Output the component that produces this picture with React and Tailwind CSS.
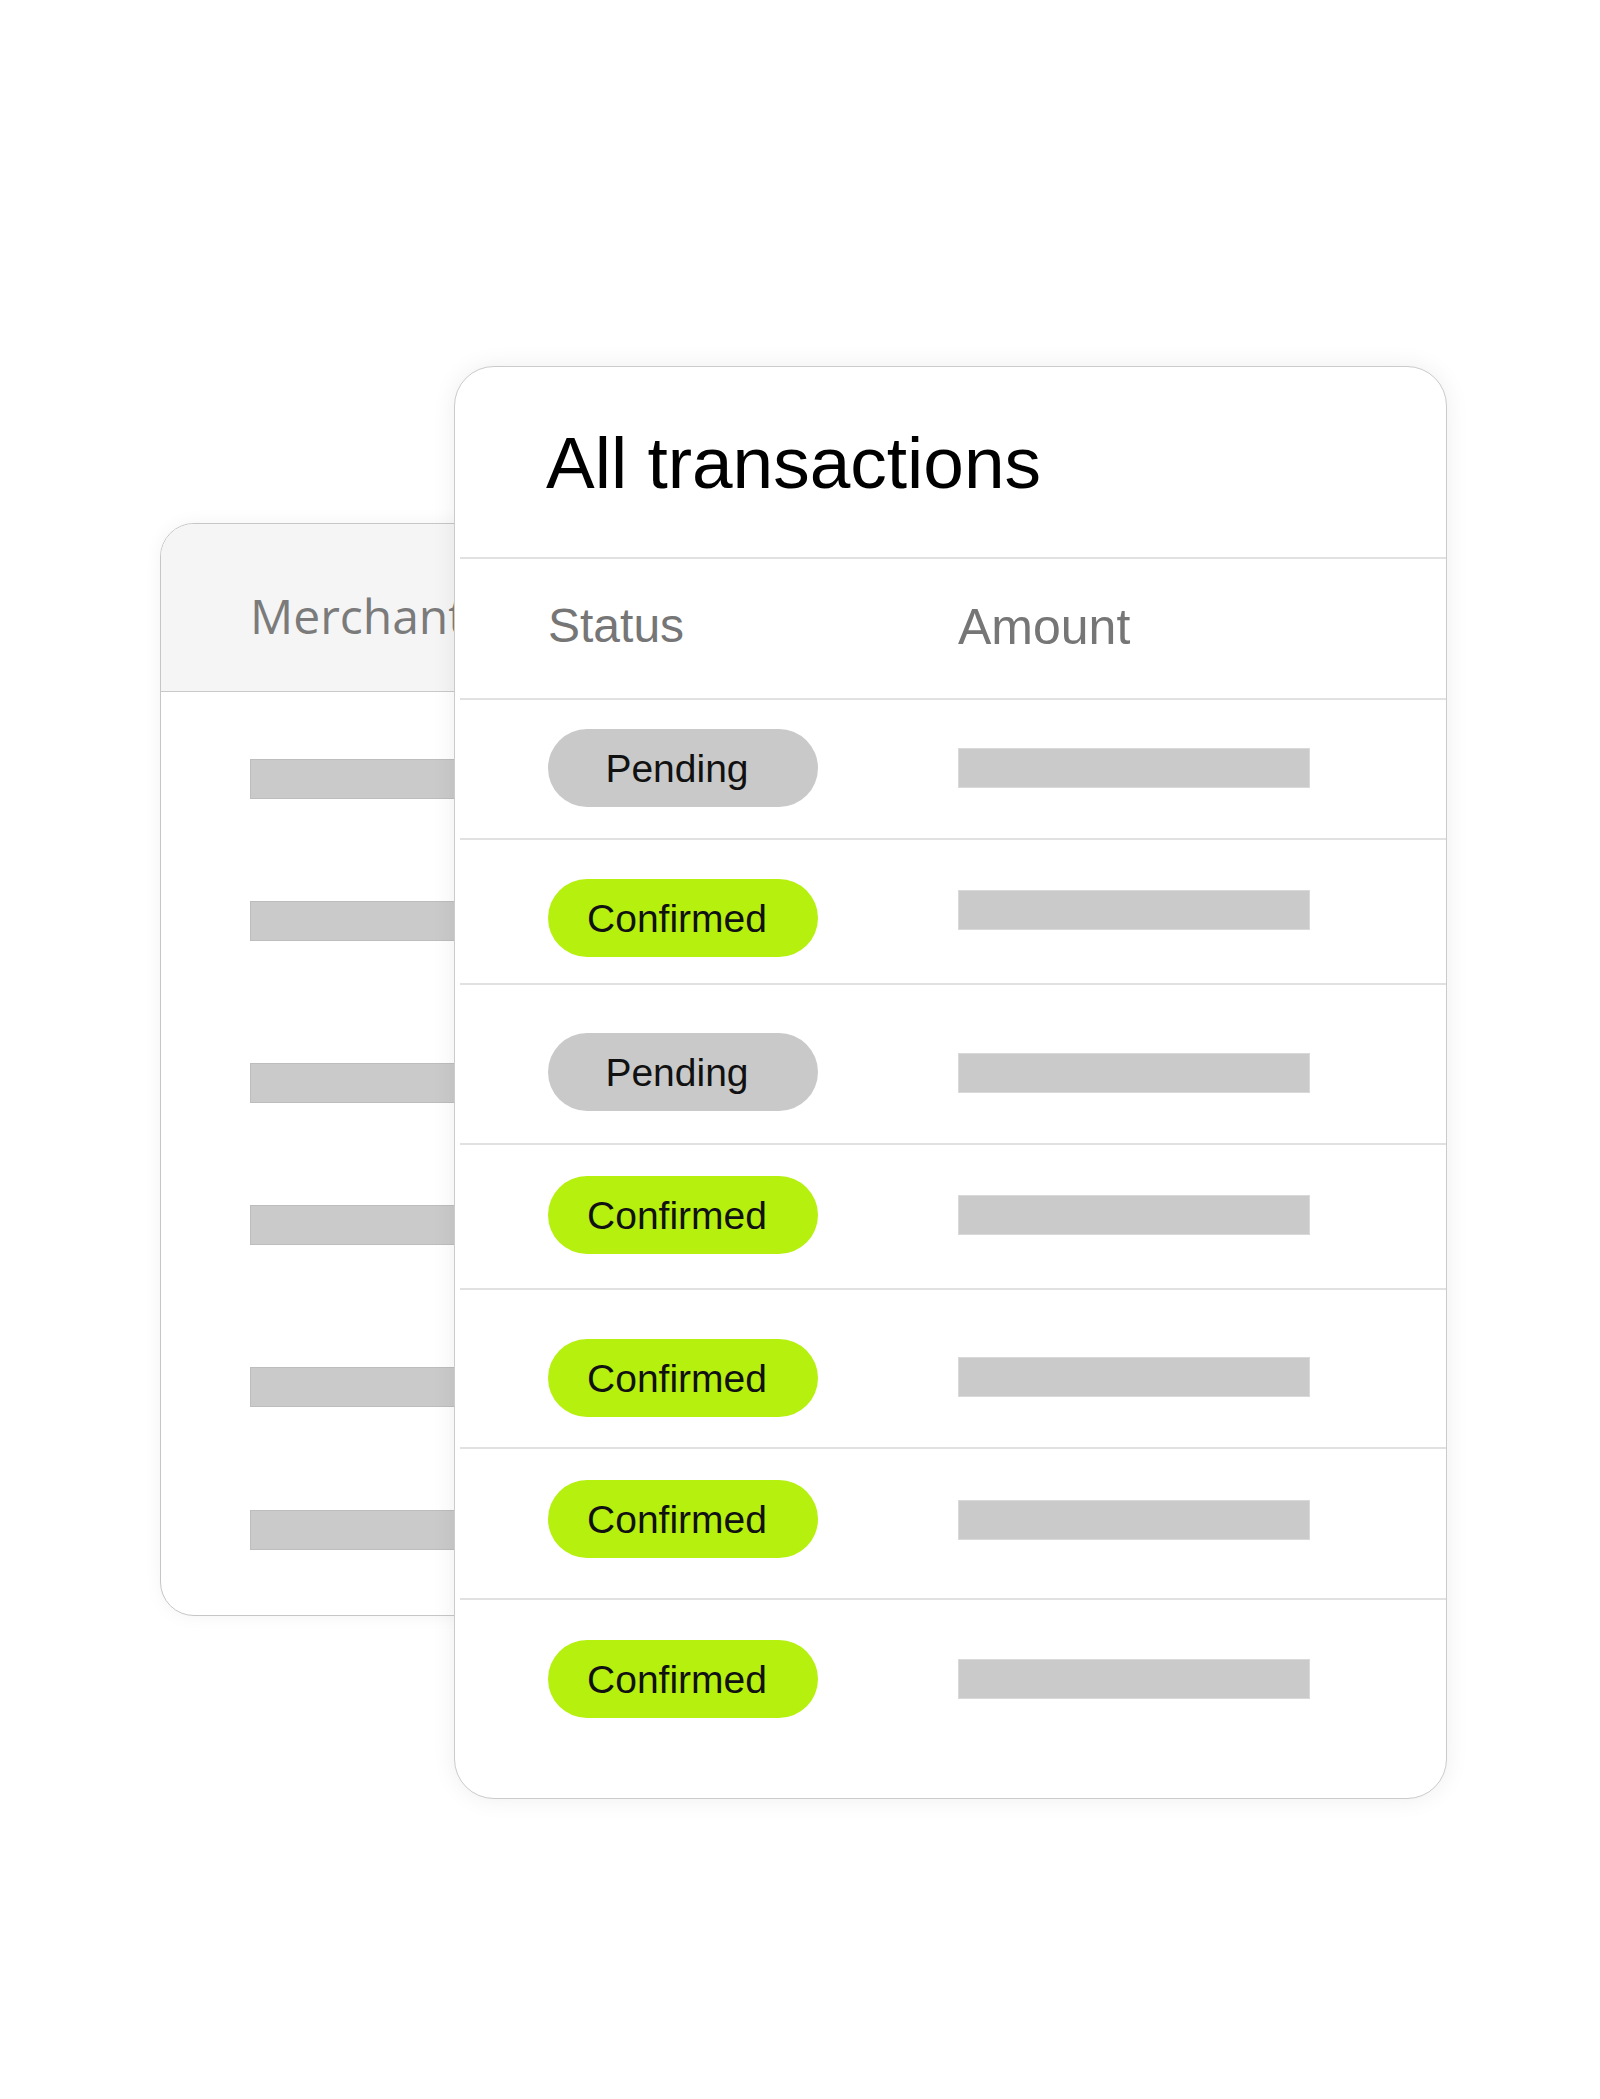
const rows = [
  { status: 'Pending', pt: 'pt-[29px]', pb: 'pb-[31px]', bar: 'mt-[19px]' },
  { status: 'Confirmed', pt: 'pt-[39px]', pb: 'pb-[26px]', bar: 'mt-[11px]' },
  { status: 'Pending', pt: 'pt-[48px]', pb: 'pb-[32px]', bar: 'mt-[20px]' },
  { status: 'Confirmed', pt: 'pt-[31px]', pb: 'pb-[34px]', bar: 'mt-[19px]' },
  { status: 'Confirmed', pt: 'pt-[49px]', pb: 'pb-[30px]', bar: 'mt-[18px]' },
  { status: 'Confirmed', pt: 'pt-[31px]', pb: 'pb-[40px]', bar: 'mt-[20px]' },
  { status: 'Confirmed', pt: 'pt-[40px]', pb: 'pb-[80px]', bar: 'mt-[19px]' },
];

// gaps above each placeholder bar on the card behind
const backBars = ['mt-0', 'mt-[102px]', 'mt-[122px]', 'mt-[102px]', 'mt-[122px]', 'mt-[103px]'];

function StatusPill({ status }) {
  const confirmed = status === 'Confirmed';
  return (
    <div
      className={
        'flex h-[78px] w-[270px] shrink-0 items-center justify-center rounded-full pr-3 text-[39px] leading-none text-[#111] ' +
        (confirmed ? 'bg-[#b5f00f]' : 'bg-[#c9c9c9]')
      }
    >
      {status}
    </div>
  );
}

function BackCard() {
  return (
    <div className="mt-[157px] w-[440px] shrink-0 overflow-hidden rounded-[34px] border border-[#c6c6c6] bg-white shadow-[0_0_18px_rgba(0,0,0,0.05)]">
      <div className="border-b border-[#c9c9c9] bg-[#f5f5f5] pl-[89px] pt-[68px] pb-[51px]">
        <span className="block font-['Open_Sans',sans-serif] text-[48px] leading-none text-[#7b7b7b]">
          Merchant
        </span>
      </div>
      <div className="flex flex-col pl-[89px] pt-[67px] pb-[65px]">
        {backBars.map((gap, i) => (
          <div key={i} className={gap + ' h-[40px] w-[320px] border border-[#bdbdbd] bg-[#cacaca]'} />
        ))}
      </div>
    </div>
  );
}

function FrontCard() {
  return (
    <div className="relative z-10 -ml-[146px] w-[993px] shrink-0 rounded-[40px] border border-[#cbcbcb] bg-white font-['Liberation_Sans',Arial,sans-serif] shadow-[0_0_24px_rgba(0,0,0,0.07)]">
      <div className="pl-[91px] pt-[59px] pb-[58px]">
        <h1 className="text-[73px] font-normal leading-none text-black">All transactions</h1>
      </div>

      <div className="ml-[5px] flex h-[141px] border-t-2 border-[#e1e1e1] pl-[88px] pt-[43px] text-[48px] leading-none text-[#767676]">
        <span className="w-[410px]">Status</span>
        <span className="text-[50px]">Amount</span>
      </div>

      {rows.map((row, i) => (
        <div
          key={i}
          className={'ml-[5px] flex items-start border-t-2 border-[#e1e1e1] pl-[88px] ' + row.pt + ' ' + row.pb}
        >
          <div className="w-[410px]">
            <StatusPill status={row.status} />
          </div>
          <div className={row.bar + ' h-[40px] w-[352px] border border-[#d9d9d9] bg-[#cacaca]'} />
        </div>
      ))}
    </div>
  );
}

export default function App() {
  return (
    <div className="flex h-[2099px] w-full items-start bg-white pl-[160px] pt-[366px]">
      <BackCard />
      <FrontCard />
    </div>
  );
}
